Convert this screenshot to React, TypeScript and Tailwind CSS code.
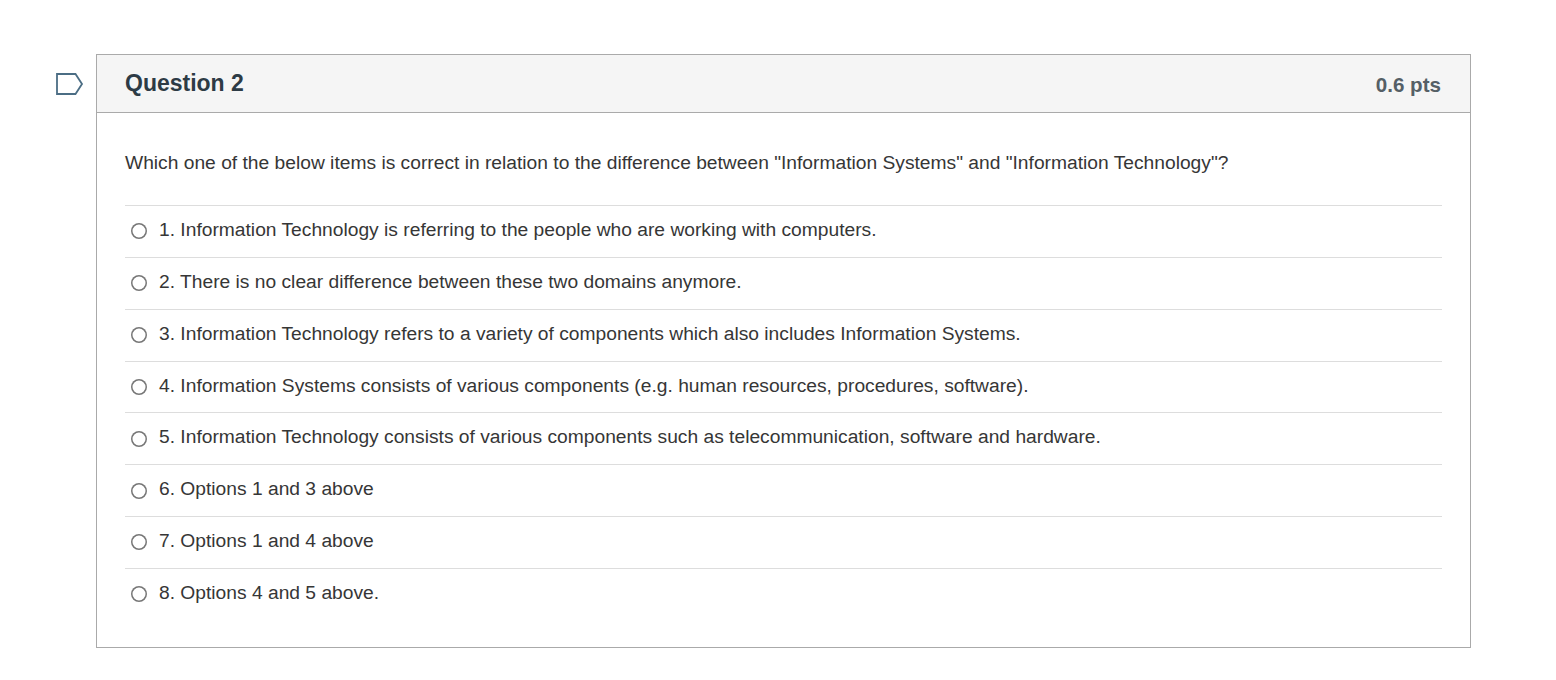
const answers = [
  "1. Information Technology is referring to the people who are working with computers.",
  "2. There is no clear difference between these two domains anymore.",
  "3. Information Technology refers to a variety of components which also includes Information Systems.",
  "4. Information Systems consists of various components (e.g. human resources, procedures, software).",
  "5. Information Technology consists of various components such as telecommunication, software and hardware.",
  "6. Options 1 and 3 above",
  "7. Options 1 and 4 above",
  "8. Options 4 and 5 above.",
];

export default function App() {
  return (
    <div className="min-h-[680px] bg-white pl-[96px] pt-[54px] font-['Liberation_Sans',Arial,sans-serif] text-[#2d3b45]">
      <div className="relative w-[1375px] border border-[#aaaaaa]">
        {/* question flag */}
        <svg className="absolute left-[-41px] top-[18px]" width="28" height="23" viewBox="0 0 28 23" fill="none">
          <path d="M1 1H19.5L26 11L19.5 21H1Z" stroke="#4b6d84" strokeWidth="1.8" />
        </svg>

        <div className="flex h-[58px] items-center justify-between border-b border-[#aaaaaa] bg-[#f5f5f5] pl-[28px] pr-[29px]">
          <h2 className="text-[23px] font-bold">Question 2</h2>
          <div className="mt-[3px] text-[20.6px] font-bold text-[#555f66]">0.6 pts</div>
        </div>

        <div className="px-[28px] pb-[27px]">
          <p className="pb-[30px] pt-[38px] text-[19.23px] leading-[24px] text-[#363636]">
            Which one of the below items is correct in relation to the difference between "Information Systems" and "Information Technology"?
          </p>
          <div>
            {answers.map((answer) => (
              <label key={answer} className="flex h-[51.85px] items-center gap-[12px] border-t border-[#dddddd] pl-[6px] text-[19.23px] text-[#363636]">
                <input type="radio" name="q2" className="h-[16px] w-[16px] appearance-none rounded-full bg-white shadow-[inset_0_0_0_1.5px_#777777]" />
                <span className="mt-[-2px]">{answer}</span>
              </label>
            ))}
          </div>
        </div>
      </div>
    </div>
  );
}
